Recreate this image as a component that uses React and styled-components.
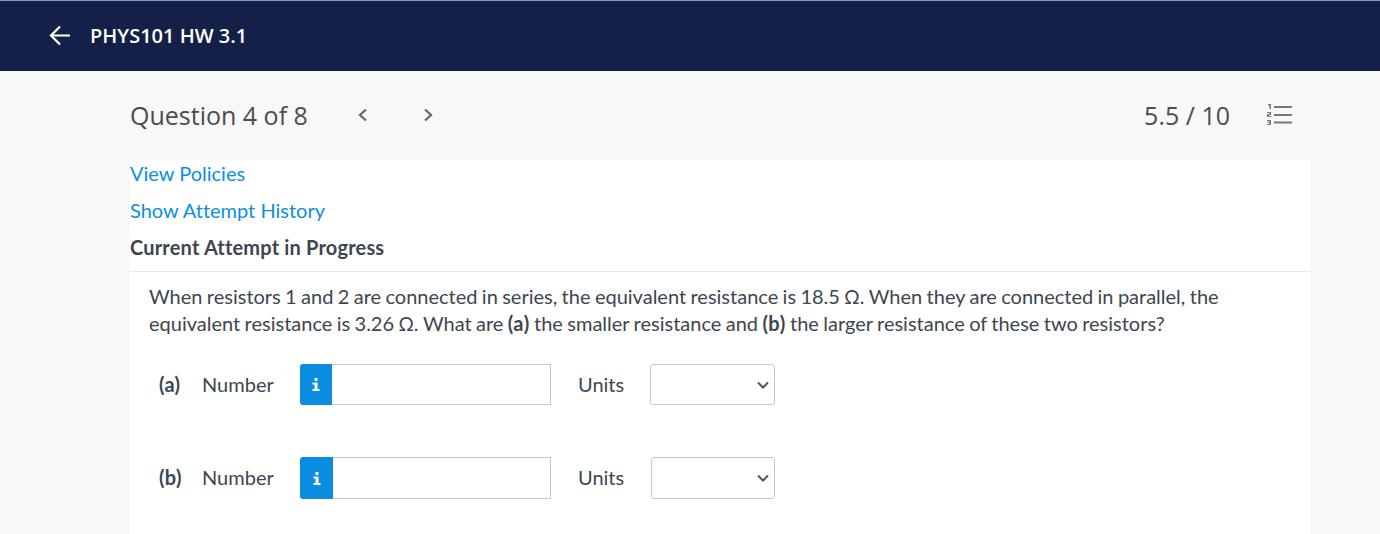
import { createGlobalStyle, styled } from "styled-components";

const GlobalStyle = createGlobalStyle`
  html, body {
    margin: 0;
    height: 534px;
    overflow: hidden;
    background: #f8f8f8;
    font-family: "Lato", "Liberation Sans", sans-serif;
    font-variant-ligatures: none;
  }
`;

const TopBar = styled.header`
  height: 68px;
  border-top: 1px solid #7f9f9c;
  background: #142047;
  display: flex;
  align-items: center;
  padding: 0 0 2px 49px;
  gap: 18px;
  color: #fff;
`;

const BackButton = styled.span`
  display: flex;
  width: 23px;
  height: 23px;
`;

const CourseTitle = styled.h1`
  margin: 0;
  font: 600 20px "Open Sans", sans-serif;
`;

const QuestionBar = styled.div`
  height: 87px;
  display: flex;
  align-items: center;
  padding: 0 87px 2px 130px;
  color: #4c4c4c;
  font: 400 25px "Open Sans", sans-serif;
`;

const QuestionNav = styled.div`
  display: flex;
  align-items: center;
  margin-left: 46px;
  gap: 47px;
`;

const Chevron = styled.svg`
  width: 18px;
  height: 18px;
  fill: none;
  stroke: #666;
  stroke-width: 2.2;
`;

const Score = styled.div`
  margin-left: auto;
  margin-right: 37px;
`;

const Content = styled.main`
  margin: 0 70px 0 130px;
  background: #fff;
  height: 374px;
  color: #3c4650;
`;

const LinkRow = styled.a`
  display: block;
  height: 37px;
  line-height: 27px;
  font-size: 20px;
  color: ${(p) => (p.$plain ? "#3c4650" : "#0a90e0")};
  font-weight: ${(p) => (p.$plain ? 700 : 400)};
  letter-spacing: ${(p) => (p.$plain ? "0.18px" : "0")};
`;

const QuestionBody = styled.section`
  border-top: 1px solid #e8e8e8;
  padding: 11px 19px 0;
`;

const Prompt = styled.p`
  margin: 0 0 27px;
  font-size: 20px;
  line-height: 27px;
  word-spacing: -0.75px;

  b {
    letter-spacing: 0.5px;
  }
`;

const Ohm = styled.span`
  font-size: 19px;
  line-height: 0;
`;

const AnswerRow = styled.div`
  display: flex;
  align-items: center;
  height: ${(p) => p.$height}px;
  margin-bottom: ${(p) => p.$gap || 0}px;
  font-size: 20px;
  padding-left: 10px;
`;

const PartLabel = styled.b`
  width: 43px;
  margin-bottom: 2px;
  letter-spacing: 0.3px;
`;

const FieldLabel = styled.span`
  width: 98px;
  margin-bottom: 2px;
`;

const InfoTag = styled.span`
  flex: none;
  width: ${(p) => p.$width}px;
  height: 100%;
  background: #0a8ce0;
  border-radius: 3px 0 0 3px;
  display: flex;
  align-items: center;
  justify-content: center;
`;

const NumberBox = styled.span`
  flex: none;
  width: ${(p) => p.$width}px;
  height: 100%;
  box-sizing: border-box;
  border: 1px solid #c8c8c8;
  border-left: none;
`;

const UnitsLabel = styled.span`
  margin: 0 0 2px 27px;
  width: ${(p) => p.$width}px;
`;

const UnitsBox = styled.span`
  flex: none;
  width: ${(p) => p.$width}px;
  height: 100%;
  box-sizing: border-box;
  border: 1px solid #c8c8c8;
  border-radius: 3px;
  display: flex;
  align-items: center;
  justify-content: flex-end;
  padding-right: 5px;
`;

const Answer = ({ part, gap, height, tag, numberWidth, labelWidth, unitsWidth }) => (
  <AnswerRow $gap={gap} $height={height}>
    <PartLabel>({part})</PartLabel>
    <FieldLabel>Number</FieldLabel>
    <InfoTag $width={tag}>
      <svg width="8" height="13" viewBox="0 0 8 13" fill="#fff">
        <path d="M2.500 0h3v3h-3zM.5 4.500h5V11H7.500v2H.5v-2h2V6.500h-2z" />
      </svg>
    </InfoTag>
    <NumberBox $width={numberWidth} />
    <UnitsLabel $width={labelWidth}>Units</UnitsLabel>
    <UnitsBox $width={unitsWidth}>
      <svg width="12" height="8" viewBox="0 0 12 8" fill="none" stroke="#555" strokeWidth="2">
        <path d="M1 1.500l5 5 5-5" />
      </svg>
    </UnitsBox>
  </AnswerRow>
);

export default function App() {
  return (
    <>
      <GlobalStyle />
      <TopBar>
        <BackButton>
          <svg viewBox="0 0 23 23" fill="none" stroke="#fff" strokeWidth="2.2">
            <path d="M21 11.500H2M11 2.500l-9 9 9 9" />
          </svg>
        </BackButton>
        <CourseTitle>PHYS101 HW 3.1</CourseTitle>
      </TopBar>
      <QuestionBar>
        Question 4 of 8
        <QuestionNav>
          <Chevron viewBox="0 0 18 18"><path d="M12 3.500L6 9l6 5.500" /></Chevron>
          <Chevron viewBox="0 0 18 18"><path d="M6 3.500L12 9l-6 5.500" /></Chevron>
        </QuestionNav>
        <Score>5.5 / 10</Score>
        <svg width="26" height="24" viewBox="0 0 26 24" fill="#777">
          <path d="M7 3h18v2H7zM7 11h18v2H7zM7 18.500h18v2H7z" />
          <path d="M1 1h3v5H2.500V2.500H1zM0 9h4v3H2v1h2v1H0v-3h2.500v-1H0zM0 17h4v5H0v-1h2.500v-1H1v-1h1.500v-.8H0z" />
        </svg>
      </QuestionBar>
      <Content>
        <LinkRow>View Policies</LinkRow>
        <LinkRow>Show Attempt History</LinkRow>
        <LinkRow $plain>Current Attempt in Progress</LinkRow>
        <QuestionBody>
          <Prompt>
            When resistors 1 and 2 are connected in series, the equivalent resistance is 18.5 <Ohm>Ω</Ohm>. When they are connected in parallel, the equivalent resistance is 3.26 <Ohm>Ω</Ohm>. What are <b>(a)</b> the smaller resistance and <b>(b)</b> the larger resistance of these two resistors?
          </Prompt>
          <Answer part="a" gap={52} height={41} tag={32} numberWidth={219} labelWidth={72} unitsWidth={125} />
          <Answer part="b" height={42} tag={33} numberWidth={218} labelWidth={73} unitsWidth={124} />
        </QuestionBody>
      </Content>
    </>
  );
}
